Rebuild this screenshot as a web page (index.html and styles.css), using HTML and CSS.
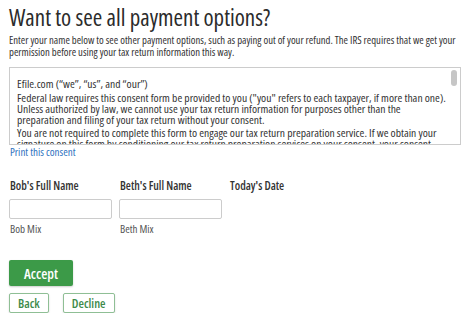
FILE: index.html
```html
<!DOCTYPE html>
<html lang="en">
<head>
  <meta charset="UTF-8">
  <meta name="viewport" content="width=device-width, initial-scale=1.0">
  <title>Payment options</title>
  <link rel="stylesheet" href="styles.css">
</head>
<body>
  <div class="container">
    <h1>Want to see all payment options?</h1>
    <p class="intro">Enter your name below to see other payment options, such as paying out of your refund. The IRS requires that we get your permission before using your tax return information this way.</p>

    <div class="consent-box">
      <div class="consent-text">
        <p>Efile.com (“we”, “us”, and “our”)</p>
        <p>Federal law requires this consent form be provided to you ("you" refers to each taxpayer, if more than one). Unless authorized by law, we cannot use your tax return information for purposes other than the preparation and filing of your tax return without your consent.</p>
        <p>You are not required to complete this form to engage our tax return preparation service. If we obtain your signature on this form by conditioning our tax return preparation services on your consent, your consent will not be valid.</p>
        <p>This consent is valid for the amount of time that you specify. If you do not specify a duration, your consent is valid for one year.</p>
      </div>
      <div class="scrollbar"><div class="thumb"></div></div>
    </div>
    <a class="print-link" href="#">Print this consent</a>

    <div class="signers">
      <div class="field">
        <label>Bob's Full Name</label>
        <input type="text">
        <span class="hint">Bob Mix</span>
      </div>
      <div class="field">
        <label>Beth's Full Name</label>
        <input type="text">
        <span class="hint">Beth Mix</span>
      </div>
      <div class="field">
        <label>Today's Date</label>
      </div>
    </div>

    <div class="actions">
      <button class="btn btn-primary">Accept</button>
      <div class="secondary">
        <button class="btn btn-outline">Back</button>
        <button class="btn btn-outline">Decline</button>
      </div>
    </div>
  </div>
</body>
</html>
```

FILE: styles.css
```css
:root {
  --text-color: #333333;
  --text-light: #555555;
  --link-color: #2f73c0;
  --green: #3c9a48;
  --green-text: #3d8a4a;
  --border-color: #cccccc;
}

* {
  margin: 0;
  padding: 0;
  box-sizing: border-box;
}

body {
  font-family: "Open Sans", "Noto Sans", sans-serif;
  font-stretch: 75%;
  color: var(--text-color);
  background: #ffffff;
}

.container {
  padding: 4px 13px 0 9px;
  display: flex;
  flex-direction: column;
  align-items: flex-start;
}

h1 {
  font-size: 23px;
  font-weight: 400;
  line-height: 26px;
  color: #2b2b2b;
}

.intro {
  font-size: 10.7px;
  line-height: 12px;
  margin-top: 4px;
}

/* Consent box */
.consent-box {
  align-self: stretch;
  margin-top: 9px;
  height: 78px;
  border: 1px solid var(--border-color);
  display: flex;
  overflow: hidden;
}

.consent-text {
  flex: 1;
  padding: 10px 2px 0 7px;
  font-size: 11.6px;
  line-height: 11px;
}

.consent-text p {
  margin-bottom: 2.5px;
}

.scrollbar {
  width: 12px;
  padding: 2px 3px;
}

.thumb {
  height: 16px;
  background: #c6c6c6;
  border-radius: 3px;
}

.print-link {
  margin-top: 1px;
  margin-left: 1px;
  font-size: 11px;
  line-height: 12px;
  color: var(--link-color);
  text-decoration: none;
}

/* Signers */
.signers {
  display: flex;
  gap: 7px;
  margin-top: 20px;
}

.field {
  width: 103px;
  display: flex;
  flex-direction: column;
}

.field label {
  font-size: 11.7px;
  font-weight: 600;
  line-height: 14px;
  padding-left: 1px;
}

.field input {
  margin-top: 7px;
  height: 20px;
  border: 1px solid var(--border-color);
  border-radius: 2px;
  font: inherit;
}

.hint {
  margin-top: 4px;
  padding-left: 1px;
  font-size: 11px;
  line-height: 12px;
  color: var(--text-light);
}

/* Buttons */
.actions {
  margin-top: 25px;
  display: flex;
  flex-direction: column;
  align-items: flex-start;
}

.btn {
  font-family: inherit;
  font-stretch: 75%;
  cursor: pointer;
  border-radius: 2px;
}

.btn-primary {
  width: 64px;
  height: 26px;
  background: var(--green);
  color: #ffffff;
  border: none;
  font-size: 14px;
  font-weight: 600;
  box-shadow: 0 1px 2px rgba(0, 0, 0, 0.2);
}

.secondary {
  display: flex;
  gap: 14px;
  margin-top: 7px;
}

.btn-outline {
  height: 20px;
  padding: 0 8px;
  background: #ffffff;
  color: var(--green-text);
  border: 1px solid #8fbf95;
  font-size: 12.5px;
  font-weight: 600;
  box-shadow: 0 1px 2px rgba(0, 0, 0, 0.15);
}
```
